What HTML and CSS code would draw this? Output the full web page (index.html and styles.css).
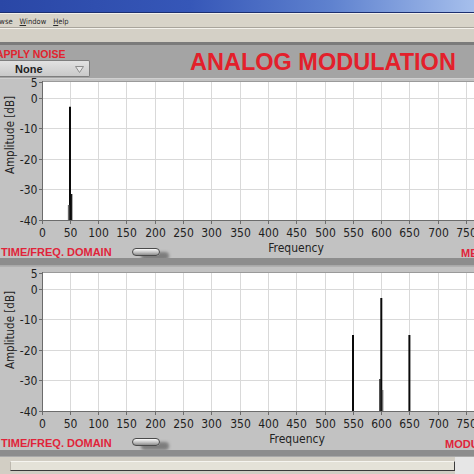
FILE: index.html
```html
<!DOCTYPE html>
<html>
<head>
<meta charset="utf-8">
<link rel="stylesheet" href="styles.css">
</head>
<body>
<div class="screen">
  <div class="titlebar"></div>
  <div class="menubar">
    <span class="menu cut">Browse</span>
    <span class="menu"><u>W</u>indow</span>
    <span class="menu"><u>H</u>elp</span>
  </div>
  <div class="toolbar"></div>
  <div class="sep"></div>
  <div class="header">
    <div class="noise">
      <div class="noise-label">APPLY NOISE</div>
      <div class="dropdown">
        <span class="dd-text">None</span>
        <svg class="dd-arrow" width="9" height="7" viewBox="0 0 9 7"><polygon points="0.5,0.5 8.5,0.5 4.5,6.5" fill="#e6e6e6" stroke="#8c8c8c" stroke-width="1"/></svg>
      </div>
    </div>
    <div class="title">ANALOG MODULATION</div>
  </div>

  <section class="graph g1">
    <svg class="plot" width="474" height="162" viewBox="0 0 474 162">
      <g>
        <rect x="42" y="3" width="440" height="139" fill="#ffffff"/>
        <path class="grid" d="M70.5 3V142M98.5 3V142M126.5 3V142M155.5 3V142M183.5 3V142M211.5 3V142M240.5 3V142M268.5 3V142M296.5 3V142M325.5 3V142M353.5 3V142M381.5 3V142M409.5 3V142M438.5 3V142M466.5 3V142M42 20.5H474M42 50.5H474M42 81.5H474M42 111.5H474"/>
        <path class="border" d="M42 3.5H474"/>
        <path class="axis" d="M42.5 3V142.5H474M39 4.5H42M39 20.5H42M39 50.5H42M39 81.5H42M39 111.5H42M39 142.5H42M42.5 142V146M70.5 142V146M98.5 142V146M126.5 142V146M155.5 142V146M183.5 142V146M211.5 142V146M240.5 142V146M268.5 142V146M296.5 142V146M325.5 142V146M353.5 142V146M381.5 142V146M409.5 142V146M438.5 142V146M466.5 142V146"/>
        <g class="ylab">
          <text x="37.5" y="9">5</text>
          <text x="37.5" y="24.5">0</text>
          <text x="37.5" y="55">-10</text>
          <text x="37.5" y="85.5">-20</text>
          <text x="37.5" y="116">-30</text>
          <text x="37.5" y="146.5">-40</text>
        </g>
        <g class="xlab">
          <text x="42.5" y="158.5">0</text>
          <text x="70.5" y="158.5">50</text>
          <text x="98.5" y="158.5">100</text>
          <text x="126.5" y="158.5">150</text>
          <text x="155.5" y="158.5">200</text>
          <text x="183.5" y="158.5">250</text>
          <text x="211.5" y="158.5">300</text>
          <text x="240.5" y="158.5">350</text>
          <text x="268.5" y="158.5">400</text>
          <text x="296.5" y="158.5">450</text>
          <text x="325.5" y="158.5">500</text>
          <text x="353.5" y="158.5">550</text>
          <text x="381.5" y="158.5">600</text>
          <text x="409.5" y="158.5">650</text>
          <text x="438.5" y="158.5">700</text>
          <text x="466.5" y="158.5">750</text>
        </g>
        <text class="ytitle" transform="translate(13.5 57) rotate(-90)">Amplitude [dB]</text>
        <path class="spike" d="M70 28.7V142"/>
        <path class="spike-thin" d="M71.6 116V142"/>
        <path class="spike-gray" d="M68.6 127V142"/>
      </g>
    </svg>
    <div class="footer f1">
      <span class="domain">TIME/FREQ. DOMAIN</span>
      <span class="toggle"></span>
      <span class="freq">Frequency</span>
      <span class="side">MESSAGE SIGNAL</span>
    </div>
  </section>

  <div class="band"></div>

  <section class="graph g2">
    <svg class="plot" width="474" height="164" viewBox="0 0 474 164">
      <g transform="translate(0 3)">
        <rect x="42" y="3" width="440" height="139" fill="#ffffff"/>
        <path class="grid" d="M70.5 3V142M98.5 3V142M126.5 3V142M155.5 3V142M183.5 3V142M211.5 3V142M240.5 3V142M268.5 3V142M296.5 3V142M325.5 3V142M353.5 3V142M381.5 3V142M409.5 3V142M438.5 3V142M466.5 3V142M42 20.5H474M42 50.5H474M42 81.5H474M42 111.5H474"/>
        <path class="border" d="M42 3.5H474"/>
        <path class="axis" d="M42.5 3V142.5H474M39 4.5H42M39 20.5H42M39 50.5H42M39 81.5H42M39 111.5H42M39 142.5H42M42.5 142V146M70.5 142V146M98.5 142V146M126.5 142V146M155.5 142V146M183.5 142V146M211.5 142V146M240.5 142V146M268.5 142V146M296.5 142V146M325.5 142V146M353.5 142V146M381.5 142V146M409.5 142V146M438.5 142V146M466.5 142V146"/>
        <g class="ylab">
          <text x="37.5" y="9">5</text>
          <text x="37.5" y="24.5">0</text>
          <text x="37.5" y="55">-10</text>
          <text x="37.5" y="85.5">-20</text>
          <text x="37.5" y="116">-30</text>
          <text x="37.5" y="146.5">-40</text>
        </g>
        <g class="xlab">
          <text x="42.5" y="158.5">0</text>
          <text x="70.5" y="158.5">50</text>
          <text x="98.5" y="158.5">100</text>
          <text x="126.5" y="158.5">150</text>
          <text x="155.5" y="158.5">200</text>
          <text x="183.5" y="158.5">250</text>
          <text x="211.5" y="158.5">300</text>
          <text x="240.5" y="158.5">350</text>
          <text x="268.5" y="158.5">400</text>
          <text x="296.5" y="158.5">450</text>
          <text x="325.5" y="158.5">500</text>
          <text x="353.5" y="158.5">550</text>
          <text x="381.5" y="158.5">600</text>
          <text x="409.5" y="158.5">650</text>
          <text x="438.5" y="158.5">700</text>
          <text x="466.5" y="158.5">750</text>
        </g>
        <text class="ytitle" transform="translate(13.5 61) rotate(-90)">Amplitude [dB]</text>
        <path class="spike" d="M353 66V142"/>
        <path class="spike" d="M381.3 29V142"/>
        <path class="spike" d="M409.4 66V142"/>
        <path class="spike-thin" d="M380 110V142"/>
        <path class="spike-gray" d="M382.6 121V142"/>
      </g>
    </svg>
    <div class="footer f2">
      <span class="domain">TIME/FREQ. DOMAIN</span>
      <span class="toggle"></span>
      <span class="freq">Frequency</span>
      <span class="side">MODULATED SIGNAL</span>
    </div>
  </section>

  <div class="band"></div>

  <div class="statusbar">
    <div class="scroll"></div>
  </div>
</div>
</body>
</html>
```

FILE: styles.css
```css
html, body {
  margin: 0;
  padding: 0;
  background: #d4d0c8;
}

.screen {
  width: 474px;
  height: 474px;
  overflow: hidden;
  font-family: "Liberation Sans", Arial, sans-serif;
}

.titlebar {
  height: 13px;
  background: linear-gradient(90deg, #2a47a6 0%, #3657b8 40%, #5f82cf 70%, #a6bfec 100%);
  border-bottom: 1px solid #1c2f70;
  box-sizing: border-box;
}

.menubar {
  height: 15px;
  box-sizing: border-box;
  background: #d8d4c9;
  border-top: 1px solid #f2f0ea;
  border-bottom: 1px solid #a9a59c;
  display: flex;
  align-items: flex-end;
  gap: 7px;
  padding-bottom: 1px;
  font-family: "DejaVu Sans Condensed", "DejaVu Sans", sans-serif;
  font-size: 7.5px;
  line-height: 9px;
  color: #2a2a2a;
  white-space: nowrap;
}

.menu u {
  text-decoration-thickness: 1px;
}

.cut {
  margin-left: -12px;
}

.toolbar {
  height: 14px;
  box-sizing: border-box;
  background: #d4d0c6;
  border-top: 1px solid #f4f2ec;
}

.sep {
  height: 3px;
  background: #7b7b7b;
}

.header {
  height: 33px;
  background: #a4a4a4;
  display: flex;
  align-items: flex-start;
}

.noise {
  width: 190px;
  flex: none;
  display: flex;
  flex-direction: column;
}

.noise-label {
  margin-top: 4px;
  margin-left: -4px;
  font-weight: bold;
  font-size: 10.5px;
  line-height: 10px;
  color: #e1232e;
  white-space: nowrap;
}

.dropdown {
  margin-top: 1px;
  width: 90px;
  height: 17px;
  box-sizing: border-box;
  border: 1px solid #7e7e7e;
  border-left: none;
  border-radius: 0 2px 2px 0;
  background: linear-gradient(#e2e2e2, #c9c9c9);
  display: flex;
  align-items: center;
  padding-left: 15px;
}

.dd-text {
  font-weight: bold;
  font-size: 11px;
  line-height: 12px;
  color: #1e1e1e;
  padding-top: 1px;
}

.dd-arrow {
  margin-left: auto;
  margin-right: 5px;
  margin-top: 1px;
}

.title {
  margin-top: 5px;
  font-weight: bold;
  font-size: 23.5px;
  line-height: 24px;
  color: #e3202b;
  white-space: nowrap;
}

.graph {
  background: #c2c2c2;
}

.g1 {
  border-top: 1px solid #d0d0d0;
  height: 180px;
  box-sizing: border-box;
}

.g2 {
  height: 184px;
  box-sizing: border-box;
  border-top: 1px solid #b0b0b0;
}

.plot {
  display: block;
  overflow: visible;
  margin-top: -1px;
  font-family: "DejaVu Sans Condensed", "DejaVu Sans", sans-serif;
}

.grid {
  fill: none;
  stroke: #d9d9d9;
  stroke-width: 1;
}

.border {
  fill: none;
  stroke: #9a9a9a;
  stroke-width: 1;
}

.axis {
  fill: none;
  stroke: #6c6c6c;
  stroke-width: 1;
}

.ylab text {
  text-anchor: end;
  font-size: 12px;
  fill: #1e1e1e;
}

.xlab text {
  text-anchor: middle;
  font-size: 12px;
  fill: #1e1e1e;
}

.ytitle {
  text-anchor: middle;
  font-size: 11.5px;
  fill: #222222;
}

.spike {
  stroke: #0a0a0a;
  stroke-width: 2;
}

.spike-thin {
  stroke: #1a1a1a;
  stroke-width: 1.5;
}

.spike-gray {
  stroke: #6a6a6a;
  stroke-width: 1.5;
}

.footer {
  display: flex;
  align-items: flex-start;
  white-space: nowrap;
  overflow: hidden;
  height: 18px;
}

.f2 {
  height: 20px;
}

.domain {
  flex: none;
  width: 132px;
  font-weight: bold;
  font-size: 11px;
  line-height: 12px;
  color: #e0243a;
  margin-top: 6px;
  padding-left: 1px;
  box-sizing: border-box;
}

.f2 .domain {
  margin-top: 7px;
}

.toggle {
  flex: none;
  width: 28px;
  height: 8px;
  box-sizing: border-box;
  margin-top: 8px;
  border: 1px solid #4a4a4a;
  border-radius: 4px;
  background: linear-gradient(#fbfbfb, #c4c4c4 55%, #8c8c8c);
  box-shadow: 9px 4px 3px rgba(70, 70, 70, 0.55);
}

.freq {
  flex: none;
  width: 60px;
  margin-left: 106px;
  text-align: center;
  font-family: "DejaVu Sans Condensed", "DejaVu Sans", sans-serif;
  font-size: 12px;
  line-height: 14px;
  color: #222222;
  margin-top: 1px;
}

.f2 .freq {
  margin-left: 107px;
  margin-top: 2px;
}

.side {
  flex: none;
  font-weight: bold;
  font-size: 11px;
  line-height: 12px;
  color: #e0243a;
  margin-left: 135px;
  margin-top: 7px;
}

.f2 .side {
  margin-left: 118px;
  margin-top: 8px;
}

.band {
  height: 8px;
  background: #8d8d8d;
  border-bottom: 1px solid #a9a9a9;
  box-sizing: border-box;
}

.g2 + .band {
  height: 7px;
}

.statusbar {
  height: 17px;
  background: linear-gradient(90deg, #d2cec4 0, #d2cec4 455px, #e6e6e6 455px);
  padding-top: 4px;
  box-sizing: border-box;
}

.scroll {
  margin-left: 10px;
  width: 445px;
  height: 10px;
  box-sizing: border-box;
  background: #e4e2d8;
  border-top: 1px solid #f6f5f0;
  border-bottom: 1px solid #3a3a3a;
  border-right: 1px solid #3a3a3a;
  border-left: 1px solid #bcb8ae;
}
```
